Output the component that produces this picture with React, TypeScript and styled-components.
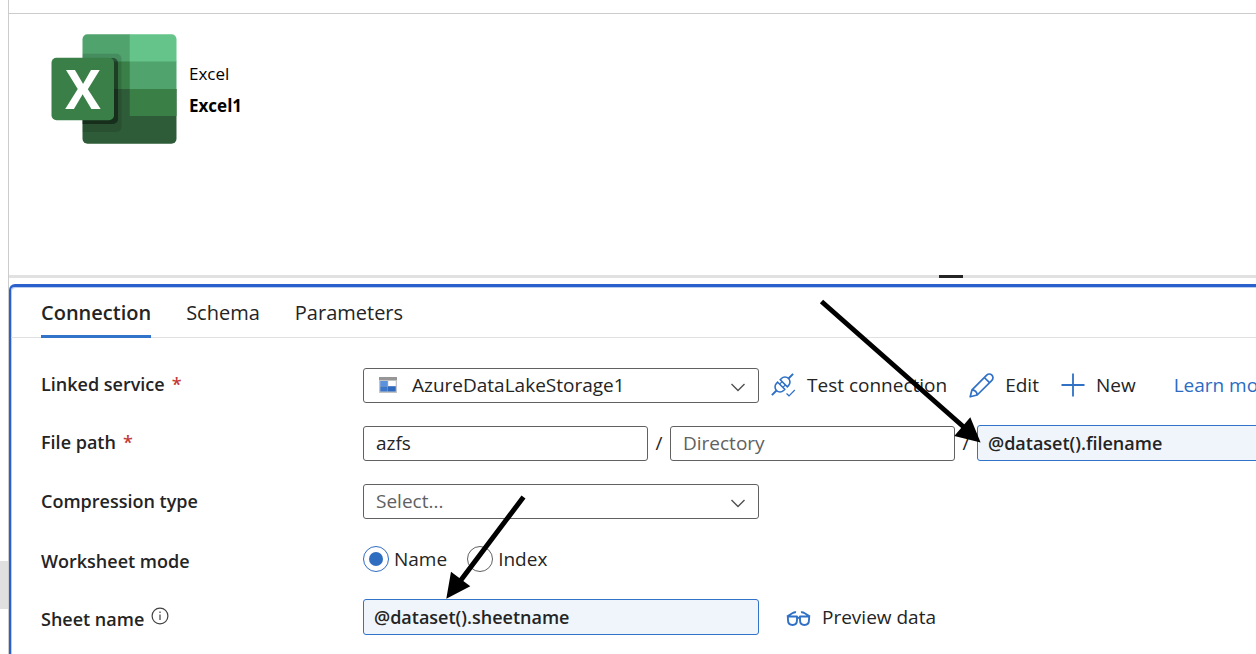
import React from "react";
import styled, { createGlobalStyle } from "styled-components";

const GlobalStyle = createGlobalStyle`
  *, *::before, *::after { box-sizing: border-box; }
  body {
    margin: 0;
    background: #fff;
    color: #242424;
    font-family: "Open Sans", "Noto Sans", sans-serif;
    font-size: 19px;
    line-height: 24px;
    overflow: hidden;
  }
  button, input, select { font: inherit; color: inherit; }
`;

const Page = styled.div`
  position: relative;
  display: flex;
  min-height: 100vh;
  overflow: hidden;
`;

const Rail = styled.aside`
  flex: none;
  width: 9px;
  border-right: 1px solid #cccccc;
`;

const RailHandle = styled.div`
  height: 48px;
  margin-top: 561px;
  background: #e0e0e0;
`;

const Main = styled.main`
  flex: 1;
  min-width: 0;
  display: flex;
  flex-direction: column;
`;

const TopStrip = styled.div`
  height: 14px;
  border-bottom: 1px solid #cccccc;
`;

const DesignCanvas = styled.section`
  height: 261px;
  padding: 20px 42px;
`;

const DatasetCard = styled.div`
  display: flex;
  gap: 12px;
`;

const DatasetText = styled.div`
  display: flex;
  flex-direction: column;
  gap: 8px;
  padding-top: 28px;
  font-size: 17px;
  color: #000;
`;

const DatasetKind = styled.span``;

const DatasetName = styled.strong`
  font-weight: 700;
`;

const Splitter = styled.div`
  height: 3px;
  margin-bottom: 6px;
  padding-left: 930px;
  background: #e1e1e1;
`;

const SplitterGrip = styled.div`
  width: 24px;
  height: 3px;
  background: #242424;
`;

const Panel = styled.section`
  flex: 1;
  border: solid #2a60cc;
  border-width: 3px 0 0 2px;
  border-top-left-radius: 6px;
  box-shadow: inset 1px 1px 0 #b8cdf0;
`;

const TabList = styled.nav`
  display: flex;
  gap: 35px;
  height: 51px;
  padding-left: 30px;
  border-bottom: 1px solid #e0e0e0;
`;

const Tab = styled.button<{ $active?: boolean }>`
  height: 51px;
  padding: 4px 0 0;
  border: 0;
  border-bottom: 3px solid ${(p) => (p.$active ? "#3073c9" : "transparent")};
  background: none;
  font-size: 20px;
  font-weight: ${(p) => (p.$active ? 600 : 400)};
`;

const Form = styled.form`
  display: flex;
  flex-direction: column;
  gap: 22px;
  padding: 29px 0 20px 30px;
`;

const Row = styled.div`
  display: grid;
  grid-template-columns: 322px minmax(0, 1fr);
  align-items: center;
  height: 36px;
`;

const LabelCell = styled.div<{ $place?: "high" | "low" }>`
  display: flex;
  gap: 7px;
  padding-top: ${(p) => (p.$place === "low" ? 4 : 0)}px;
  padding-bottom: ${(p) => (p.$place === "high" ? 3 : 0)}px;
  font-size: 18px;
  font-weight: 600;
`;

const Required = styled.span`
  color: #c43a36;
`;

const Controls = styled.div`
  display: flex;
  align-items: center;
`;

const SelectBox = styled.div`
  flex: none;
  display: flex;
  align-items: center;
  width: 396px;
  height: 35px;
  padding: 0 12px;
  border: 1px solid #616161;
  border-radius: 3px;
`;

const Select = styled.select<{ $muted?: boolean }>`
  flex: 1;
  min-width: 0;
  height: 30px;
  padding: 0;
  border: 0;
  outline: 0;
  appearance: none;
  background: none;
  color: ${(p) => (p.$muted ? "#616161" : "#242424")};
`;

const StorageIconCell = styled.span`
  display: flex;
  width: 36px;
  padding-left: 3px;
`;

const TextInput = styled.input<{ $dynamic?: boolean; $wide?: boolean }>`
  flex: none;
  width: ${(p) => (p.$wide ? 396 : 285)}px;
  height: ${(p) => (p.$dynamic ? 36 : 35)}px;
  padding: 0 ${(p) => (p.$dynamic ? 10 : 12)}px;
  border: 1px solid ${(p) => (p.$dynamic ? "#3073c9" : "#616161")};
  border-radius: 3px;
  outline: 0;
  background: ${(p) => (p.$dynamic ? "#f0f5fb" : "#fff")};
  font-size: ${(p) => (p.$dynamic ? 18 : 19)}px;
  font-weight: ${(p) => (p.$dynamic ? 600 : 400)};
  &::placeholder { color: #616161; opacity: 1; }
`;

const Slash = styled.span`
  flex: none;
  width: 22px;
  text-align: center;
`;

const Actions = styled.div<{ $indent: number }>`
  display: flex;
  align-items: center;
  gap: 22px;
  padding-left: ${(p) => p.$indent}px;
  white-space: nowrap;
`;

const Action = styled.button`
  flex: none;
  display: flex;
  align-items: center;
  gap: 11px;
  padding: 0;
  border: 0;
  background: none;
  svg { flex: none; }
`;

const LearnMore = styled.a`
  padding-left: 16px;
  color: #2b6cc4;
  text-decoration: none;
`;

const RadioLabel = styled.label`
  display: flex;
  align-items: center;
  gap: 5px;
  margin-right: 20px;
`;

const Radio = styled.input`
  display: grid;
  place-items: center;
  width: 26px;
  height: 26px;
  margin: 0;
  border: 1px solid #616161;
  border-radius: 50%;
  appearance: none;
  &:checked { border-color: #2f6dc0; }
  &:checked::before {
    content: "";
    width: 14px;
    height: 14px;
    border-radius: 50%;
    background: #2f6dc0;
  }
`;

const Annotations = styled.svg`
  position: absolute;
  top: 0;
  left: 0;
  pointer-events: none;
`;

const ExcelLogo = () => (
  <svg width="126" height="110" viewBox="0 0 126 110" role="img" aria-label="Excel">
    <defs>
      <clipPath id="book">
        <rect x="31.5" y="0.3" width="94" height="109.4" rx="5" />
      </clipPath>
    </defs>
    <g clipPath="url(#book)">
      <rect x="31" width="48" height="28" fill="#50a36c" />
      <rect x="78.7" width="48" height="28" fill="#65c489" />
      <rect x="31" y="27.5" width="48" height="28" fill="#3b7f48" />
      <rect x="78.7" y="27.5" width="48" height="28" fill="#50a36c" />
      <rect x="31" y="55" width="96" height="56" fill="#2e5c39" />
      <rect x="78.7" y="55" width="48" height="27" fill="#3a7f45" />
      <path d="M31 19.8H65.500a5 5 0 0 1 5 5V93a5 5 0 0 1-5 5H31z" fill="#000" opacity="0.13" />
      <path d="M31 24H62a5 5 0 0 1 5 5V85a5 5 0 0 1-5 5H31z" fill="#000" opacity="0.42" />
    </g>
    <rect x="0.500" y="23.700" width="62.500" height="62.500" rx="5" fill="#3a7f48" />
    <text x="32" y="74.500" fill="#fff" fontSize="53" fontWeight="700" textAnchor="middle">X</text>
  </svg>
);

const StorageIcon = () => (
  <svg width="18" height="16" viewBox="0 0 18 16" aria-hidden="true">
    <rect width="18" height="16" fill="#c2c4c6" />
    <rect width="18" height="3" fill="#969696" />
    <rect x="1.300" y="4" width="7.400" height="5" fill="#5a92dd" />
    <rect x="9.300" y="4" width="7.400" height="5" fill="#fff" />
    <rect x="1.300" y="9.300" width="7.400" height="5.200" fill="#3b78cc" />
    <rect x="9" y="9.300" width="7.700" height="5.200" fill="#2e6bc0" />
  </svg>
);

const Chevron = () => (
  <svg width="16" height="14" viewBox="0 0 16 14" fill="none" stroke="#505050" strokeWidth="1.400" aria-hidden="true">
    <path d="M1.500 6 8 12.500 14.500 6" />
  </svg>
);

const PlugIcon = () => (
  <svg width="25" height="24" viewBox="0 0 25 24" fill="none" stroke="#3070c5" strokeWidth="1.600" aria-hidden="true">
    <g transform="translate(11.500 11.500) rotate(-45)">
      <path d="M-1.800-5V5H-3.500a5 5 0 0 1 0-10zM1.800-5V5H3.500a5 5 0 0 0 0-10z" />
      <path d="M-8.500 0H-15M8.500 0H15" strokeWidth="2" />
      <path d="M-1.800-2.300H1.800M-1.800 2.300H1.800" strokeWidth="1.200" />
    </g>
    <path d="M15.500 20.500l2.500 2.300 5.800-5.800" strokeWidth="1.200" />
  </svg>
);

const PencilIcon = () => (
  <svg width="25" height="25" viewBox="0 0 25 25" fill="none" stroke="#3070c5" strokeWidth="1.700" strokeLinejoin="round" aria-hidden="true">
    <path d="M1.200 23.800 3 16.800 17.700 2.100a3.600 3.600 0 0 1 5.200 5.200L8.200 22zM3 16.800c2.800.2 4.900 2.300 5.200 5.200M15.300 4.500l5.200 5.200" />
  </svg>
);

const PlusIcon = () => (
  <svg width="24" height="24" viewBox="0 0 24 24" stroke="#3070c5" strokeWidth="1.800" aria-hidden="true">
    <path d="M12 0.500v23M0.500 12h23" />
  </svg>
);

const GlassesIcon = () => (
  <svg width="25" height="20" viewBox="0 0 25 20" fill="none" stroke="#3070c5" strokeWidth="1.900" strokeLinejoin="round" aria-hidden="true">
    <path d="M1.800 9.500H11v3.600c0 3-1.700 4.900-4.400 4.900S2 16 2 13zM14 9.500h9.200L23 13c0 3-1.900 5-4.600 5S14 16 14 13zM11 11.200q1.500-1 3 0M1 9.500 6.300 6.200c1.500-.9 2.700-1.100 3.700-.9M24 9.500l-5.300-3.300c-1.500-.9-2.700-1.100-3.700-.9" />
  </svg>
);

const InfoIcon = () => (
  <svg width="18" height="18" viewBox="0 0 18 18" fill="none" stroke="#424242" strokeWidth="1.200" aria-hidden="true">
    <circle cx="9" cy="9" r="7.900" />
    <path d="M9 7.500V13M9 4.500v1.500" />
  </svg>
);

export default function App() {
  return (
    <>
      <GlobalStyle />
      <Page>
        <Rail>
          <RailHandle />
        </Rail>
        <Main>
          <TopStrip />
          <DesignCanvas>
            <DatasetCard>
              <ExcelLogo />
              <DatasetText>
                <DatasetKind>Excel</DatasetKind>
                <DatasetName>Excel1</DatasetName>
              </DatasetText>
            </DatasetCard>
          </DesignCanvas>
          <Splitter>
            <SplitterGrip />
          </Splitter>
          <Panel>
            <TabList>
              <Tab type="button" $active>Connection</Tab>
              <Tab type="button">Schema</Tab>
              <Tab type="button">Parameters</Tab>
            </TabList>
            <Form>
              <Row>
                <LabelCell $place="high">
                  <label htmlFor="linked-service">Linked service</label>
                  <Required>*</Required>
                </LabelCell>
                <Controls>
                  <SelectBox>
                    <StorageIconCell><StorageIcon /></StorageIconCell>
                    <Select id="linked-service">
                      <option>AzureDataLakeStorage1</option>
                    </Select>
                    <Chevron />
                  </SelectBox>
                  <Actions $indent={12}>
                    <Action type="button"><PlugIcon />Test connection</Action>
                    <Action type="button"><PencilIcon />Edit</Action>
                    <Action type="button"><PlusIcon />New</Action>
                    <LearnMore href="#">Learn more</LearnMore>
                  </Actions>
                </Controls>
              </Row>
              <Row>
                <LabelCell $place="high">
                  <label htmlFor="file-path">File path</label>
                  <Required>*</Required>
                </LabelCell>
                <Controls>
                  <TextInput id="file-path" defaultValue="azfs" />
                  <Slash>/</Slash>
                  <TextInput aria-label="Directory" placeholder="Directory" />
                  <Slash>/</Slash>
                  <TextInput aria-label="File name" defaultValue="@dataset().filename" $dynamic />
                </Controls>
              </Row>
              <Row>
                <LabelCell>
                  <label htmlFor="compression">Compression type</label>
                </LabelCell>
                <Controls>
                  <SelectBox>
                    <Select id="compression" $muted>
                      <option>Select...</option>
                    </Select>
                    <Chevron />
                  </SelectBox>
                </Controls>
              </Row>
              <Row role="radiogroup" aria-labelledby="worksheet-mode">
                <LabelCell id="worksheet-mode" $place="low">Worksheet mode</LabelCell>
                <Controls>
                  <RadioLabel>
                    <Radio type="radio" name="mode" defaultChecked />
                    Name
                  </RadioLabel>
                  <RadioLabel>
                    <Radio type="radio" name="mode" />
                    Index
                  </RadioLabel>
                </Controls>
              </Row>
              <Row>
                <LabelCell $place="low">
                  <label htmlFor="sheet-name">Sheet name</label>
                  <InfoIcon />
                </LabelCell>
                <Controls>
                  <TextInput id="sheet-name" defaultValue="@dataset().sheetname" $dynamic $wide />
                  <Actions $indent={27}>
                    <Action type="button"><GlassesIcon />Preview data</Action>
                  </Actions>
                </Controls>
              </Row>
            </Form>
          </Panel>
        </Main>
        <Annotations width="1000" height="620" viewBox="0 0 1000 620" aria-hidden="true">
          <path d="M821.500 301.500 966 429M523.500 497 458 584" stroke="#000" strokeWidth="5" fill="none" />
          <path d="M980.600 442.500 970.300 417.300 954.300 436zM446.300 598.700 451 571.700 470.300 586.300z" />
        </Annotations>
      </Page>
    </>
  );
}
